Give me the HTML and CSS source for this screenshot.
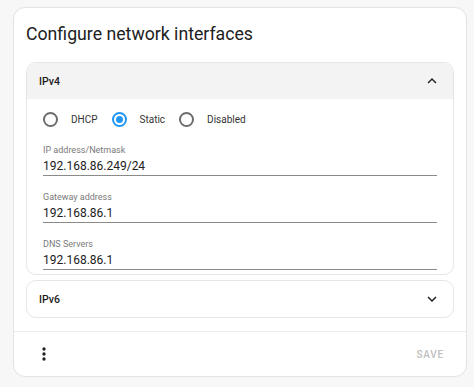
FILE: index.html
```html
<!DOCTYPE html>
<html>
<head>
<meta charset="utf-8">
<link rel="stylesheet" href="styles.css">
</head>
<body>
<div class="card">
  <div class="title">Configure network interfaces</div>
  <div class="panel open">
    <div class="panel-head">
      <span class="panel-title">IPv4</span>
      <svg class="chev" viewBox="0 0 24 24" width="18" height="18"><path d="M7.41 15.41L12 10.83l4.59 4.58L18 14l-6-6-6 6z"/></svg>
    </div>
    <div class="panel-body">
      <div class="radios">
        <label class="radio"><span class="circle"></span><span class="rlabel">DHCP</span></label>
        <label class="radio checked"><span class="circle"><span class="dot"></span></span><span class="rlabel">Static</span></label>
        <label class="radio"><span class="circle"></span><span class="rlabel">Disabled</span></label>
      </div>
      <div class="field">
        <div class="flabel">IP address/Netmask</div>
        <div class="fvalue">192.168.86.249/24</div>
      </div>
      <div class="field">
        <div class="flabel">Gateway address</div>
        <div class="fvalue">192.168.86.1</div>
      </div>
      <div class="field">
        <div class="flabel">DNS Servers</div>
        <div class="fvalue">192.168.86.1</div>
      </div>
    </div>
  </div>
  <div class="panel closed">
    <div class="panel-head">
      <span class="panel-title">IPv6</span>
      <svg class="chev" viewBox="0 0 24 24" width="18" height="18"><path d="M7.41 8.59L12 13.17l4.59-4.58L18 10l-6 6-6-6z"/></svg>
    </div>
  </div>
  <div class="footer">
    <svg class="dots" viewBox="0 0 24 24" width="20" height="20"><path d="M12 16a2 2 0 0 1 2 2 2 2 0 0 1-2 2 2 2 0 0 1-2-2 2 2 0 0 1 2-2m0-6a2 2 0 0 1 2 2 2 2 0 0 1-2 2 2 2 0 0 1-2-2 2 2 0 0 1 2-2m0-6a2 2 0 0 1 2 2 2 2 0 0 1-2 2 2 2 0 0 1-2-2 2 2 0 0 1 2-2z"/></svg>
    <span class="save">SAVE</span>
  </div>
</div>
</body>
</html>
```
FILE: styles.css
```css
html, body {
  margin: 0;
  padding: 0;
  background: #f7f7f7;
  font-family: Roboto, "Liberation Sans", sans-serif;
  color: #212121;
}
body {
  padding: 7px 7px 0 13px;
}
.card {
  box-sizing: border-box;
  width: 454px;
  height: 370px;
  background: #ffffff;
  border: 1px solid #e3e3e3;
  border-radius: 12px;
  display: flex;
  flex-direction: column;
}
.title {
  font-size: 17.7px;
  line-height: 24px;
  padding: 14px 0 0 12px;
  height: 39px;
  box-sizing: border-box;
  color: #212121;
}
.panel {
  margin: 15px 12px 0 12px;
  border: 1px solid #e6e6e6;
  border-radius: 10px;
  overflow: hidden;
}
.panel.closed {
  margin-top: 5px;
}
.panel-head {
  height: 36px;
  display: flex;
  align-items: center;
  justify-content: space-between;
  padding: 0 12px 0 12px;
  font-size: 10.5px;
  font-weight: 500;
  color: #1a1a1a;
}
.open .panel-head {
  background: #f3f3f3;
}
.chev {
  fill: #212121;
}
.panel-body {
  padding: 10px 16px 4px 16px;
}
.radios {
  display: flex;
  align-items: center;
  height: 20px;
  margin-bottom: 14px;
}
.radio {
  display: flex;
  align-items: center;
  margin-right: 14px;
}
.circle {
  box-sizing: border-box;
  width: 15px;
  height: 15px;
  border: 2px solid #6e6e6e;
  border-radius: 50%;
  display: flex;
  align-items: center;
  justify-content: center;
}
.checked .circle {
  border-color: #2196f3;
}
.dot {
  width: 7px;
  height: 7px;
  border-radius: 50%;
  background: #2196f3;
}
.rlabel {
  font-size: 10px;
  margin-left: 13px;
  color: #333;
}
.field {
  border-bottom: 1px solid #8a8a8a;
}
.field + .field {
  margin-top: 14px;
}
.flabel {
  font-size: 9px;
  color: #7a7a7a;
  line-height: 14px;
}
.fvalue {
  font-size: 12px;
  line-height: 18px;
  color: #212121;
}
.footer {
  margin-top: auto;
  border-top: 1px solid #ececec;
  height: 44px;
  display: flex;
  align-items: center;
  justify-content: space-between;
  padding: 0 22px 0 20px;
}
.dots {
  fill: #212121;
}
.save {
  font-size: 10px;
  font-weight: 500;
  letter-spacing: 0.8px;
  color: #c0c0c0;
}
```
